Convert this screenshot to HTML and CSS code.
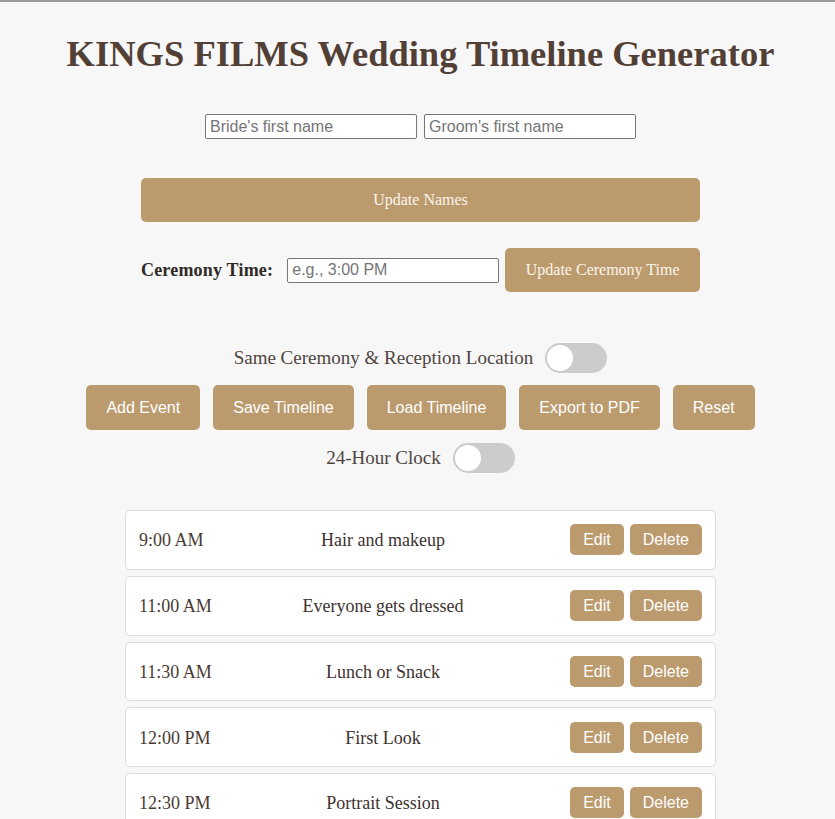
FILE: index.html
```html
<!DOCTYPE html>
<html lang="en">
<head>
<meta charset="utf-8">
<title>KINGS FILMS Wedding Timeline Generator</title>
<link rel="stylesheet" href="styles.css">
</head>
<body>
<div class="page">
  <h1 class="title">KINGS FILMS Wedding Timeline Generator</h1>

  <div class="names">
    <input class="text-input" type="text" placeholder="Bride's first name">
    <input class="text-input" type="text" placeholder="Groom's first name">
  </div>

  <button class="btn btn-serif btn-wide">Update Names</button>

  <div class="ceremony">
    <label class="ceremony-label">Ceremony Time:</label>
    <input class="text-input" type="text" placeholder="e.g., 3:00 PM">
    <button class="btn btn-serif">Update Ceremony Time</button>
  </div>

  <div class="toggle-row toggle-row-first">
    <span class="toggle-label">Same Ceremony &amp; Reception Location</span>
    <span class="switch"><span class="knob"></span></span>
  </div>

  <div class="actions">
    <button class="btn btn-sans">Add Event</button>
    <button class="btn btn-sans">Save Timeline</button>
    <button class="btn btn-sans">Load Timeline</button>
    <button class="btn btn-sans">Export to PDF</button>
    <button class="btn btn-sans">Reset</button>
  </div>

  <div class="toggle-row">
    <span class="toggle-label">24-Hour Clock</span>
    <span class="switch"><span class="knob"></span></span>
  </div>

  <div class="timeline">
    <div class="item">
      <span class="time">9:00 AM</span>
      <span class="event">Hair and makeup</span>
      <span class="item-actions"><button class="btn btn-small">Edit</button><button class="btn btn-small">Delete</button></span>
    </div>
    <div class="item">
      <span class="time">11:00 AM</span>
      <span class="event">Everyone gets dressed</span>
      <span class="item-actions"><button class="btn btn-small">Edit</button><button class="btn btn-small">Delete</button></span>
    </div>
    <div class="item">
      <span class="time">11:30 AM</span>
      <span class="event">Lunch or Snack</span>
      <span class="item-actions"><button class="btn btn-small">Edit</button><button class="btn btn-small">Delete</button></span>
    </div>
    <div class="item">
      <span class="time">12:00 PM</span>
      <span class="event">First Look</span>
      <span class="item-actions"><button class="btn btn-small">Edit</button><button class="btn btn-small">Delete</button></span>
    </div>
    <div class="item">
      <span class="time">12:30 PM</span>
      <span class="event">Portrait Session</span>
      <span class="item-actions"><button class="btn btn-small">Edit</button><button class="btn btn-small">Delete</button></span>
    </div>
  </div>
</div>
</body>
</html>
```

FILE: styles.css
```css
html, body {
  margin: 0;
  padding: 0;
}
body {
  background: #f7f7f7;
  border-top: 2px solid #9a9a9a;
  font-family: "Liberation Serif", "Times New Roman", serif;
  color: #4a3c34;
}
.page {
  padding-left: 6px;
  display: flex;
  flex-direction: column;
  align-items: center;
}
.title {
  margin: 30px 0 0 0;
  font-size: 36.5px;
  line-height: 44px;
  font-weight: bold;
  color: #524036;
  text-align: center;
}
.names {
  margin-top: 38px;
  display: flex;
  gap: 7px;
}
.text-input {
  box-sizing: border-box;
  width: 212px;
  height: 25px;
  padding: 1px 4px;
  border: 1px solid #767676;
  border-radius: 2px;
  background: #fff;
  font-family: "Liberation Sans", Arial, sans-serif;
  font-size: 16px;
  color: #333;
}
.text-input::placeholder {
  color: #757575;
}
.btn {
  border: none;
  background: #bb9b6e;
  color: #fff;
  border-radius: 5px;
  cursor: pointer;
}
.btn-serif {
  font-family: "Liberation Serif", "Times New Roman", serif;
  font-size: 16px;
  line-height: 20px;
  padding: 12px 20px;
  color: #fbf5ea;
}
.btn-wide {
  margin-top: 39px;
  width: 559px;
}
.ceremony {
  margin-top: 26px;
  display: flex;
  align-items: center;
}
.ceremony .btn-serif {
  padding: 12px 20.5px;
}
.ceremony-label {
  font-size: 18px;
  font-weight: bold;
  letter-spacing: 0.2px;
  color: #2f2a26;
  margin-right: 14px;
}
.ceremony .text-input {
  margin-right: 6px;
}
.toggle-row {
  display: flex;
  align-items: center;
  gap: 12px;
}
.toggle-row-first {
  margin-top: 51px;
}
.toggle-label {
  font-size: 19px;
  color: #4f4540;
}
.switch {
  position: relative;
  display: block;
  width: 62px;
  height: 30px;
  border-radius: 15px;
  background: #cccccc;
}
.knob {
  position: absolute;
  left: 2px;
  top: 2px;
  width: 26px;
  height: 26px;
  border-radius: 50%;
  background: #fff;
}
.actions {
  margin: 12px 0 13px 0;
  display: flex;
  gap: 13px;
}
.btn-sans {
  font-family: "Liberation Sans", Arial, sans-serif;
  font-size: 16px;
  line-height: 19px;
  padding: 13px 20px;
}
.timeline {
  margin-top: 37px;
  width: 591px;
  display: flex;
  flex-direction: column;
  gap: 6px;
}
.item {
  box-sizing: border-box;
  height: 59.75px;
  display: flex;
  align-items: center;
  padding: 0 13px;
  background: #fff;
  border: 1px solid #dcdcdc;
  border-radius: 5px;
}
.time {
  width: 90px;
  flex: none;
  font-size: 18px;
  color: #4a3a34;
  padding-top: 2px;
}
.event {
  flex: 1;
  text-align: center;
  font-size: 18px;
  color: #3e3230;
  margin-right: 33px;
  padding-top: 2px;
}
.item-actions {
  display: flex;
  gap: 6px;
}
.btn-small {
  font-family: "Liberation Sans", Arial, sans-serif;
  font-size: 16px;
  line-height: 19px;
  padding: 6px 13px;
}
```
